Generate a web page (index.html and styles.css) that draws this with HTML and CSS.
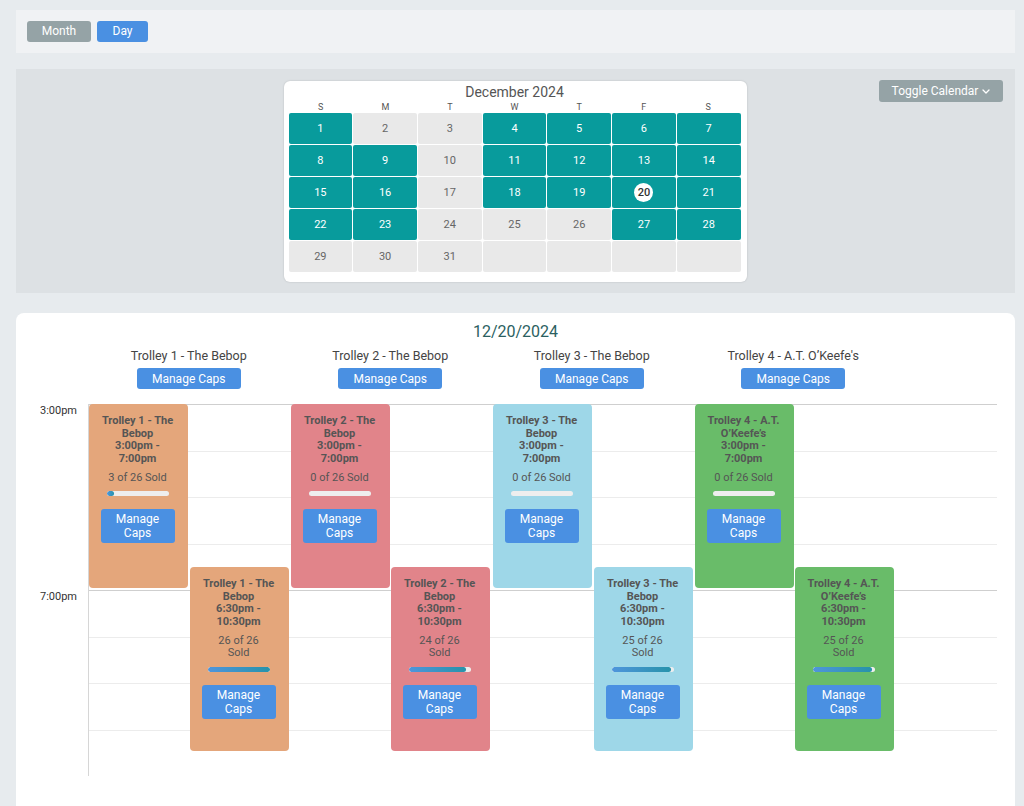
FILE: index.html
```html
<!DOCTYPE html>
<html>
<head>
<meta charset="utf-8">
<link rel="stylesheet" href="styles.css">
</head>
<body>
<div class="page">
  <div class="toolbar">
    <button class="btn btn-month">Month</button>
    <button class="btn btn-day">Day</button>
  </div>

  <div class="cal-section">
    <div class="mini-cal">
      <div class="cal-title">December 2024</div>
      <div class="cal-dow"><span>S</span><span>M</span><span>T</span><span>W</span><span>T</span><span>F</span><span>S</span></div>
      <div class="cal-grid">
        <div class="d on">1</div><div class="d">2</div><div class="d">3</div><div class="d on">4</div><div class="d on">5</div><div class="d on">6</div><div class="d on">7</div>
        <div class="d on">8</div><div class="d on">9</div><div class="d">10</div><div class="d on">11</div><div class="d on">12</div><div class="d on">13</div><div class="d on">14</div>
        <div class="d on">15</div><div class="d on">16</div><div class="d">17</div><div class="d on">18</div><div class="d on">19</div><div class="d on"><span class="today">20</span></div><div class="d on">21</div>
        <div class="d on">22</div><div class="d on">23</div><div class="d">24</div><div class="d">25</div><div class="d">26</div><div class="d on">27</div><div class="d on">28</div>
        <div class="d">29</div><div class="d">30</div><div class="d">31</div><div class="d"></div><div class="d"></div><div class="d"></div><div class="d"></div>
      </div>
    </div>
    <button class="toggle">Toggle Calendar <svg class="chev" width="8" height="5" viewBox="0 0 8 5"><path d="M1 1l3 3 3-3" fill="none" stroke="#fff" stroke-width="1.3" stroke-linecap="round" stroke-linejoin="round"/></svg></button>
  </div>

  <div class="day-card">
    <div class="day-title">12/20/2024</div>
    <div class="resources">
      <div class="res"><div class="res-name">Trolley 1 - The Bebop</div><button class="res-btn">Manage Caps</button></div>
      <div class="res"><div class="res-name">Trolley 2 - The Bebop</div><button class="res-btn">Manage Caps</button></div>
      <div class="res"><div class="res-name">Trolley 3 - The Bebop</div><button class="res-btn">Manage Caps</button></div>
      <div class="res"><div class="res-name">Trolley 4 - A.T. O’Keefe's</div><button class="res-btn">Manage Caps</button></div>
    </div>

    <div class="timeline">
      <div class="times">
        <div class="t">3:00pm</div><div class="t"></div><div class="t"></div><div class="t"></div>
        <div class="t">7:00pm</div><div class="t"></div><div class="t"></div><div class="t"></div>
      </div>
      <div class="grid">
        <div class="row hour"></div><div class="row"></div><div class="row"></div><div class="row"></div>
        <div class="row hour"></div><div class="row"></div><div class="row"></div><div class="row"></div>

        <div class="ev orange" style="left:0;top:0">
          <div class="ev-title">Trolley 1 - The Bebop</div><div class="ev-title">3:00pm - 7:00pm</div>
          <div class="ev-sold">3 of 26 Sold</div>
          <div class="bar"><div class="fill" style="width:11.5%"></div></div>
          <button class="ev-btn">Manage Caps</button>
        </div>
        <div class="ev orange" style="left:101px;top:163px">
          <div class="ev-title">Trolley 1 - The Bebop</div><div class="ev-title">6:30pm - 10:30pm</div>
          <div class="ev-sold">26 of 26 Sold</div>
          <div class="bar"><div class="fill" style="width:100%"></div></div>
          <button class="ev-btn">Manage Caps</button>
        </div>

        <div class="ev red" style="left:202px;top:0">
          <div class="ev-title">Trolley 2 - The Bebop</div><div class="ev-title">3:00pm - 7:00pm</div>
          <div class="ev-sold">0 of 26 Sold</div>
          <div class="bar"><div class="fill" style="width:0%"></div></div>
          <button class="ev-btn">Manage Caps</button>
        </div>
        <div class="ev red" style="left:302px;top:163px">
          <div class="ev-title">Trolley 2 - The Bebop</div><div class="ev-title">6:30pm - 10:30pm</div>
          <div class="ev-sold">24 of 26 Sold</div>
          <div class="bar"><div class="fill" style="width:92.3%"></div></div>
          <button class="ev-btn">Manage Caps</button>
        </div>

        <div class="ev blue" style="left:404px;top:0">
          <div class="ev-title">Trolley 3 - The Bebop</div><div class="ev-title">3:00pm - 7:00pm</div>
          <div class="ev-sold">0 of 26 Sold</div>
          <div class="bar"><div class="fill" style="width:0%"></div></div>
          <button class="ev-btn">Manage Caps</button>
        </div>
        <div class="ev blue" style="left:505px;top:163px">
          <div class="ev-title">Trolley 3 - The Bebop</div><div class="ev-title">6:30pm - 10:30pm</div>
          <div class="ev-sold">25 of 26 Sold</div>
          <div class="bar"><div class="fill" style="width:96.2%"></div></div>
          <button class="ev-btn">Manage Caps</button>
        </div>

        <div class="ev green" style="left:606px;top:0">
          <div class="ev-title">Trolley 4 - A.T. O’Keefe’s</div><div class="ev-title">3:00pm - 7:00pm</div>
          <div class="ev-sold">0 of 26 Sold</div>
          <div class="bar"><div class="fill" style="width:0%"></div></div>
          <button class="ev-btn">Manage Caps</button>
        </div>
        <div class="ev green" style="left:706px;top:163px">
          <div class="ev-title">Trolley 4 - A.T. O’Keefe’s</div><div class="ev-title">6:30pm - 10:30pm</div>
          <div class="ev-sold">25 of 26 Sold</div>
          <div class="bar"><div class="fill" style="width:96.2%"></div></div>
          <button class="ev-btn">Manage Caps</button>
        </div>
      </div>
    </div>
  </div>
</div>
</body>
</html>
```

FILE: styles.css
```css
* { box-sizing: border-box; }

body {
  margin: 0;
  background: #e7ebee;
  font-family: Roboto, "Liberation Sans", sans-serif;
  color: #444;
}

button {
  font-family: Roboto, "Liberation Sans", sans-serif;
  cursor: pointer;
}

.page {
  padding: 10px 9px 0 16px;
}

/* toolbar */
.toolbar {
  background: #f0f2f4;
  height: 43px;
  padding: 11px;
  display: flex;
  gap: 6px;
}

.btn {
  height: 21px;
  border: 0;
  border-radius: 3px;
  color: #fff;
  font-size: 12px;
  line-height: 21px;
  padding: 0;
}

.btn-month { width: 64px; background: #95a3a6; }
.btn-day { width: 51px; background: #4a90e2; }

/* calendar section */
.cal-section {
  margin-top: 16px;
  background: #dde1e4;
  height: 224px;
  padding: 11px 12px 11px 11px;
  display: grid;
  grid-template-columns: 1fr auto 1fr;
}

.mini-cal {
  grid-column: 2;
  width: 463px;
  height: 201px;
  margin-top: 1px;
  background: #fff;
  border-radius: 6px;
  box-shadow: 0 0 2px rgba(0, 0, 0, 0.18);
  padding: 2px 6px 10px 5px;
}

.cal-title {
  text-align: center;
  font-size: 14px;
  line-height: 18px;
  color: #555;
}

.cal-dow {
  display: grid;
  grid-template-columns: repeat(7, 1fr);
  font-size: 9px;
  line-height: 12px;
  color: #555;
  text-align: center;
}

.cal-grid {
  display: grid;
  grid-template-columns: repeat(7, 1fr);
  grid-auto-rows: 31px;
  gap: 1px;
}

.d {
  background: #e9e9e9;
  color: #666;
  font-size: 11px;
  border-radius: 2px;
  display: flex;
  align-items: center;
  justify-content: center;
}

.d.on {
  background: #089b9c;
  color: #fff;
}

.today {
  width: 19px;
  height: 19px;
  border-radius: 50%;
  background: #fff;
  color: #333;
  font-weight: 500;
  display: flex;
  align-items: center;
  justify-content: center;
}

.toggle {
  grid-column: 3;
  justify-self: end;
  align-self: start;
  width: 124px;
  height: 22px;
  border: 0;
  border-radius: 3px;
  background: #95a3a6;
  color: #fff;
  font-size: 12px;
  padding: 0;
  display: flex;
  align-items: center;
  justify-content: center;
  gap: 4px;
}

.chev { display: block; }

/* day view */
.day-card {
  margin-top: 20px;
  background: #fff;
  border-radius: 8px 8px 0 0;
  padding-top: 8px;
  min-height: 500px;
}

.day-title {
  text-align: center;
  font-size: 16px;
  line-height: 22px;
  color: #2b5f61;
}

.resources {
  display: grid;
  grid-template-columns: repeat(4, 201.5px);
  padding-left: 72px;
  margin-top: 5px;
}

.res {
  display: flex;
  flex-direction: column;
  align-items: center;
}

.res-name {
  font-size: 12.5px;
  line-height: 16px;
  color: #444;
}

.res-btn {
  margin-top: 4px;
  width: 104px;
  height: 21px;
  border: 0;
  border-radius: 3px;
  background: #4a90e2;
  color: #fff;
  font-size: 12px;
  padding: 0;
}

.timeline {
  display: flex;
  margin-top: 15px;
  margin-right: 18px;
}

.times {
  width: 72px;
  padding-right: 11px;
  display: grid;
  grid-template-rows: repeat(8, 46.5px);
}

.t {
  text-align: right;
  font-size: 11px;
  line-height: 13px;
  color: #333;
}

.grid {
  flex: 1;
  position: relative;
  border-left: 1px solid #d6d6d6;
  display: grid;
  grid-template-rows: repeat(8, 46.5px);
}

.row {
  border-top: 1px solid #ececec;
}

.row.hour {
  border-top-color: #cfcfcf;
}

/* events */
.ev {
  position: absolute;
  width: 99px;
  height: 184px;
  border-radius: 4px;
  padding: 11px 9px 0 7px;
  text-align: center;
  color: #555;
}

.orange { background: #e4a67b; }
.red { background: #e1848a; }
.blue { background: #9ed7e8; }
.green { background: #69bc69; }

.ev-title {
  font-size: 11px;
  font-weight: 700;
  line-height: 12.5px;
}

.ev-sold {
  width: 62px;
  margin: 6.5px auto 0;
  font-size: 11px;
  line-height: 12.5px;
}

.bar {
  width: 62px;
  height: 5px;
  margin: 7px auto 0;
  background: #eeeeee;
  border-radius: 3px;
  overflow: hidden;
}

.fill {
  height: 100%;
  border-radius: 3px;
  background: linear-gradient(90deg, #4f95dc, #2793aa);
}

.ev-btn {
  display: block;
  width: 74px;
  margin: 13px auto 0;
  padding: 3px 6px;
  border: 0;
  border-radius: 3px;
  background: #4a90e2;
  color: #fff;
  font-size: 12px;
  line-height: 14px;
}
```
